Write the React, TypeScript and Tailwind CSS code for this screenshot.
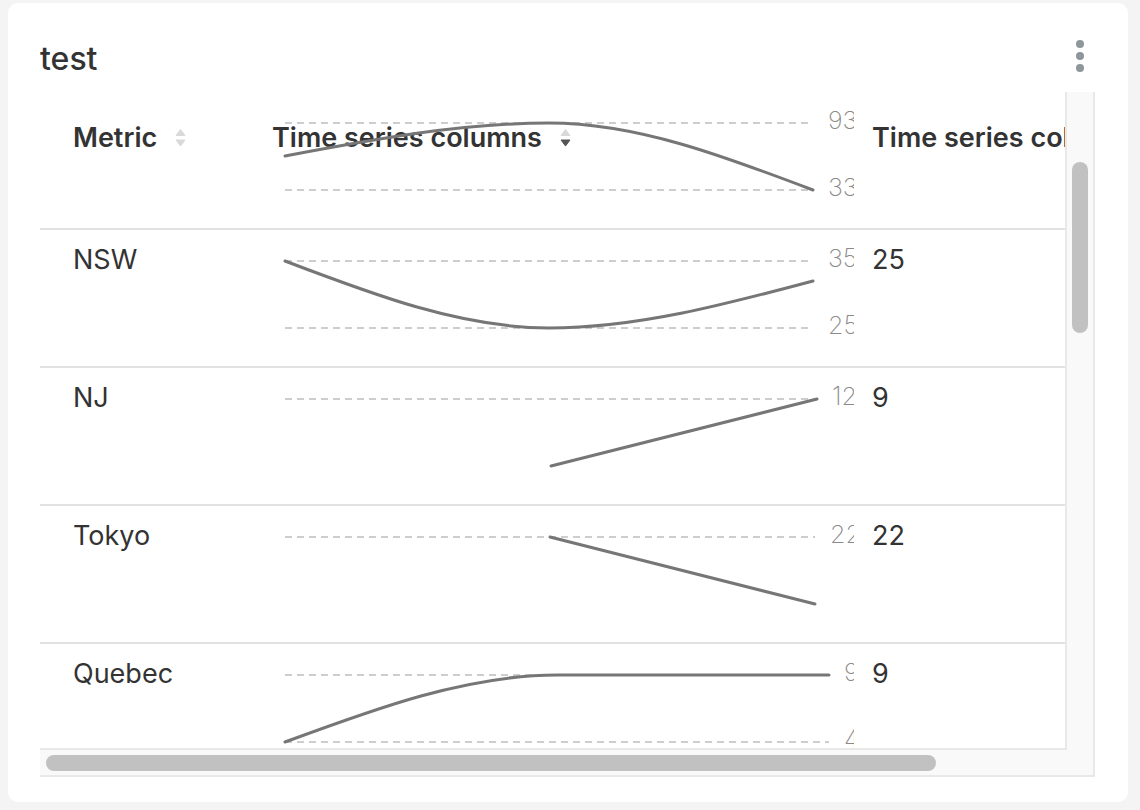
import React from "react";

type Pt = [number, number];

interface Row {
  name: string;
  value: string;
  ys: (number | null)[];
  end: number;
  top: string;
  bottom?: string;
}

const header: Row = { name: "", value: "", ys: [64, 31, 98], end: 557, top: "93", bottom: "33" };

const rows: Row[] = [
  { name: "NSW", value: "25", ys: [31, 98, 51], end: 557, top: "35", bottom: "25" },
  { name: "NJ", value: "9", ys: [null, 98, 31], end: 561, top: "12" },
  { name: "Tokyo", value: "22", ys: [null, 31, 98], end: 559, top: "22" },
  { name: "Quebec", value: "9", ys: [98, 31, 31], end: 573, top: "9", bottom: "4" },
];

// monotone cubic, same idea as d3 curveMonotoneX
function monotonePath(pts: Pt[]): string {
  const n = pts.length;
  if (n < 2) return "";
  if (n === 2) return `M${pts[0][0]},${pts[0][1]}L${pts[1][0]},${pts[1][1]}`;
  const h: number[] = [];
  const s: number[] = [];
  for (let i = 0; i < n - 1; i++) {
    h.push(pts[i + 1][0] - pts[i][0]);
    s.push((pts[i + 1][1] - pts[i][1]) / h[i]);
  }
  const t: number[] = new Array(n).fill(0);
  for (let i = 1; i < n - 1; i++) {
    const s0 = s[i - 1];
    const s1 = s[i];
    if (s0 * s1 <= 0) t[i] = 0;
    else {
      const p = (s0 * h[i] + s1 * h[i - 1]) / (h[i - 1] + h[i]);
      t[i] = (Math.sign(s0) + Math.sign(s1)) * Math.min(Math.abs(s0), Math.abs(s1), 0.5 * Math.abs(p));
    }
  }
  t[0] = (3 * s[0] - t[1]) / 2;
  t[n - 1] = (3 * s[n - 2] - t[n - 2]) / 2;
  let d = `M${pts[0][0]},${pts[0][1]}`;
  for (let i = 0; i < n - 1; i++) {
    const dx = h[i] / 3;
    d += `C${pts[i][0] + dx},${pts[i][1] + dx * t[i]},${pts[i + 1][0] - dx},${pts[i + 1][1] - dx * t[i + 1]},${pts[i + 1][0]},${pts[i + 1][1]}`;
  }
  return d;
}

function AxisLabel({ x, y, children }: { x: number; y: number; children: React.ReactNode }) {
  return (
    <text x={x} y={y - 3} dominantBaseline="central" fontSize="25" fontWeight="200" fill="#8a8a8a" fontFamily="Inter, sans-serif">
      {children}
    </text>
  );
}

function Sparkline({ row }: { row: Row }) {
  const start = 29;
  const mid = (start + row.end) / 2;
  const xs = [start, mid, row.end];
  const pts: Pt[] = [];
  row.ys.forEach((y, i) => {
    if (y !== null) pts.push([xs[i], y]);
  });
  return (
    <svg width="598" height="136" viewBox="0 0 598 136" className="block">
      <line x1={start} y1={31} x2={row.end} y2={31} stroke="#bdbdbd" strokeWidth="1.5" strokeDasharray="7 5" />
      <AxisLabel x={row.end + 15} y={31}>{row.top}</AxisLabel>
      {row.bottom && (
        <>
          <line x1={start} y1={98} x2={row.end} y2={98} stroke="#bdbdbd" strokeWidth="1.5" strokeDasharray="7 5" />
          <AxisLabel x={row.end + 15} y={98}>{row.bottom}</AxisLabel>
        </>
      )}
      <path d={monotonePath(pts)} fill="none" stroke="#767676" strokeWidth="3" strokeLinecap="round" />
    </svg>
  );
}

function SortIcon({ active }: { active?: boolean }) {
  return (
    <svg width="11" height="20" viewBox="0 0 11 20" className="ml-[18px]">
      <path d="M5.5 1.5 L10 7.5 L1 7.5 Z" fill="#d9d9d9" stroke="#d9d9d9" strokeWidth="1" strokeLinejoin="round" />
      <path d="M1 12 L10 12 L5.5 18 Z" fill={active ? "#555" : "#d9d9d9"} stroke={active ? "#555" : "#d9d9d9"} strokeWidth="1" strokeLinejoin="round" />
    </svg>
  );
}

export default function App() {
  return (
    <div className="w-[1140px] h-[810px] bg-[#f4f4f4] pt-[3px] pl-[8px] overflow-hidden" style={{ fontFamily: "Inter, 'Noto Sans', sans-serif" }}>
      <div className="w-[1120px] h-[799px] bg-white rounded-[10px] px-[32px] flex flex-col text-[#333]">
        {/* titre + menu */}
        <div className="h-[89px] flex items-start justify-between pt-[38px]">
          <div className="text-[32px] leading-[36px] font-medium">test</div>
          <div className="flex flex-col gap-[4px] mr-[12px] mt-[-1px]">
            <span className="w-[8px] h-[8px] rounded-full bg-[#8c969b]" />
            <span className="w-[8px] h-[8px] rounded-full bg-[#8c969b]" />
            <span className="w-[8px] h-[8px] rounded-full bg-[#8c969b]" />
          </div>
        </div>

        {/* tableau */}
        <div className="grid grid-cols-[1027px_28px] grid-rows-[656px_29px] bg-[#f9f9f9] w-[1055px]">
          <div className="overflow-hidden bg-white border-r-2 border-[#e8e8e8]">
            <div className="w-[1400px]">
              <div className="flex h-[138px] border-b-2 border-[#e2e2e2]">
                <div className="w-[216px] pl-[33px] pt-[26px] flex items-start">
                  <span className="text-[27px] leading-[40px] font-semibold">Metric</span>
                  <div className="mt-[10px]">
                    <SortIcon />
                  </div>
                </div>
                <div className="w-[600px] relative overflow-hidden">
                  <div className="pl-[16px] pt-[26px] flex items-start">
                    <span className="text-[27px] leading-[40px] font-semibold">Time series columns</span>
                    <div className="mt-[10px]">
                      <SortIcon active />
                    </div>
                  </div>
                  <div className="absolute left-0 top-0">
                    <Sparkline row={header} />
                  </div>
                </div>
                <div className="pl-[16px] pt-[26px]">
                  <span className="text-[27px] leading-[40px] font-semibold whitespace-nowrap">Time series columns</span>
                </div>
              </div>
              {rows.map((row) => (
                <div key={row.name} className="flex h-[138px] border-b-2 border-[#e2e2e2]">
                  <div className="w-[216px] pl-[33px] pt-[10px] text-[27px] leading-[40px]">{row.name}</div>
                  <div className="w-[600px] overflow-hidden">
                    <Sparkline row={row} />
                  </div>
                  <div className="pl-[16px] pt-[10px] text-[27px] leading-[40px]">{row.value}</div>
                </div>
              ))}
            </div>
          </div>
          <div className="border-r-2 border-[#e8e8e8] pt-[70px] flex justify-center">
            <div className="w-[16px] h-[171px] rounded-full bg-[#c1c1c1]" />
          </div>
          <div className="border-t-2 border-b-2 border-[#e8e8e8] flex items-center pl-[6px]">
            <div className="w-[890px] h-[16px] rounded-full bg-[#c1c1c1]" />
          </div>
          <div className="border-r-2 border-b-2 border-[#e8e8e8]" />
        </div>
      </div>
    </div>
  );
}
